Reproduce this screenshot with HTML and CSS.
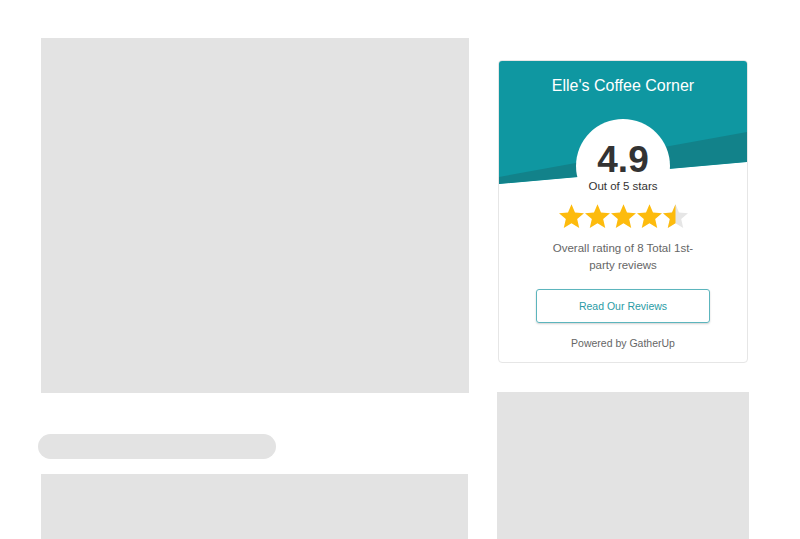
FILE: index.html
```html
<!DOCTYPE html>
<html lang="en">
<head>
<meta charset="utf-8">
<title>Elle's Coffee Corner</title>
<link rel="stylesheet" href="styles.css">
</head>
<body>
<div class="page">
  <main class="main-col">
    <div class="ph ph-hero"></div>
    <div class="ph ph-pill"></div>
    <div class="ph ph-body"></div>
  </main>
  <aside class="side-col">
    <section class="card">
      <div class="card-head">
        <h2 class="card-title">Elle's Coffee Corner</h2>
      </div>
      <div class="badge">
        <div class="score">4.9</div>
        <div class="score-sub">Out of 5 stars</div>
      </div>
      <div class="stars">
        <svg class="star" viewBox="2 2 20 19"><path d="M12 17.27L18.18 21l-1.64-7.03L22 9.24l-7.19-.61L12 2 9.19 8.63 2 9.24l5.46 4.730L5.82 21z"/></svg>
        <svg class="star" viewBox="2 2 20 19"><path d="M12 17.27L18.18 21l-1.64-7.03L22 9.24l-7.19-.61L12 2 9.19 8.63 2 9.24l5.46 4.73L5.82 21z"/></svg>
        <svg class="star" viewBox="2 2 20 19"><path d="M12 17.27L18.18 21l-1.64-7.03L22 9.24l-7.19-.61L12 2 9.19 8.63 2 9.24l5.46 4.73L5.82 21z"/></svg>
        <svg class="star" viewBox="2 2 20 19"><path d="M12 17.27L18.18 21l-1.64-7.03L22 9.24l-7.19-.61L12 2 9.19 8.63 2 9.24l5.46 4.73L5.82 21z"/></svg>
        <svg class="star star-half" viewBox="2 2 20 19">
          <defs><clipPath id="halfclip"><rect x="2" y="2" width="10" height="19"/></clipPath></defs>
          <path class="star-empty" d="M12 17.27L18.18 21l-1.64-7.03L22 9.24l-7.19-.61L12 2 9.19 8.63 2 9.24l5.46 4.73L5.82 21z"/>
          <path clip-path="url(#halfclip)" d="M12 17.27L18.18 21l-1.64-7.03L22 9.24l-7.19-.61L12 2 9.19 8.63 2 9.24l5.46 4.73L5.82 21z"/>
        </svg>
      </div>
      <p class="summary">Overall rating of 8 Total 1st-party reviews</p>
      <a class="btn" href="#">Read Our Reviews</a>
      <p class="powered">Powered by GatherUp</p>
    </section>
    <div class="ph ph-side"></div>
  </aside>
</div>
</body>
</html>
```

FILE: styles.css
```css
* { box-sizing: border-box; }

html, body {
  margin: 0;
  padding: 0;
  background: #ffffff;
  overflow: hidden;
  font-family: "Liberation Sans", Arial, sans-serif;
}

.page {
  display: flex;
  gap: 28px;
  padding: 38px 0 0 41px;
  height: 539px;
  overflow: hidden;
}

.main-col {
  width: 428px;
  display: flex;
  flex-direction: column;
  flex: none;
}

.side-col {
  width: 252px;
  display: flex;
  flex-direction: column;
  flex: none;
}

.ph { background: #e3e3e3; flex: none; }

.ph-hero { height: 355px; }

.ph-pill {
  margin: 41px 0 0 -3px;
  width: 238px;
  height: 25px;
  border-radius: 12.5px;
}

.ph-body {
  margin-top: 15px;
  width: 427px;
  height: 120px;
}

.ph-side {
  margin-top: 29px;
  height: 200px;
}

/* Card */
.card {
  margin: 22px 1px 0;
  border: 1px solid #e6e6e6;
  border-radius: 4px;
  overflow: hidden;
  display: flex;
  flex-direction: column;
  align-items: center;
  padding-bottom: 12px;
  background: #fff;
  flex: none;
}

.card-head {
  position: relative;
  align-self: stretch;
  height: 123px;
  background: #0f97a1;
  clip-path: polygon(0 0, 100% 0, 100% 101px, 0 123px);
  padding-top: 15px;
  text-align: center;
}

.card-head::after {
  content: "";
  position: absolute;
  inset: 0;
  background: #12828a;
  clip-path: polygon(0 116px, 100% 71px, 100% 101px, 0 123px);
}

.card-title {
  margin: 0;
  font-size: 16px;
  font-weight: normal;
  line-height: 20px;
  color: #ffffff;
}

.badge {
  position: relative;
  z-index: 1;
  width: 94px;
  height: 94px;
  margin: -65px 0 -9px;
  border-radius: 50%;
  background: #ffffff;
  text-align: center;
  padding-top: 22px;
}

.score {
  font-size: 37px;
  line-height: 37px;
  font-weight: bold;
  color: #333333;
}

.score-sub {
  margin-top: 0;
  font-size: 11.5px;
  line-height: 16px;
  color: #333333;
  white-space: nowrap;
}

.stars {
  position: relative;
  z-index: 2;
  display: flex;
  gap: 1px;
  height: 24px;
}

.star {
  width: 25px;
  height: 24px;
  fill: #fdbb0d;
}

.star-half .star-empty { fill: #e6e6e6; }

.summary {
  margin: 12px 0 0;
  max-width: 150px;
  font-size: 11.5px;
  line-height: 17px;
  color: #666666;
  text-align: center;
}

.btn {
  margin-top: 15px;
  width: 174px;
  height: 34px;
  display: flex;
  align-items: center;
  justify-content: center;
  border: 1px solid #5cb5bd;
  border-radius: 3px;
  box-shadow: 0 1px 2px rgba(0, 0, 0, 0.18);
  color: #2a9ba5;
  font-size: 10.5px;
  text-decoration: none;
}

.powered {
  margin: 13px 0 0;
  font-size: 10.5px;
  line-height: 14px;
  color: #666666;
}
```
